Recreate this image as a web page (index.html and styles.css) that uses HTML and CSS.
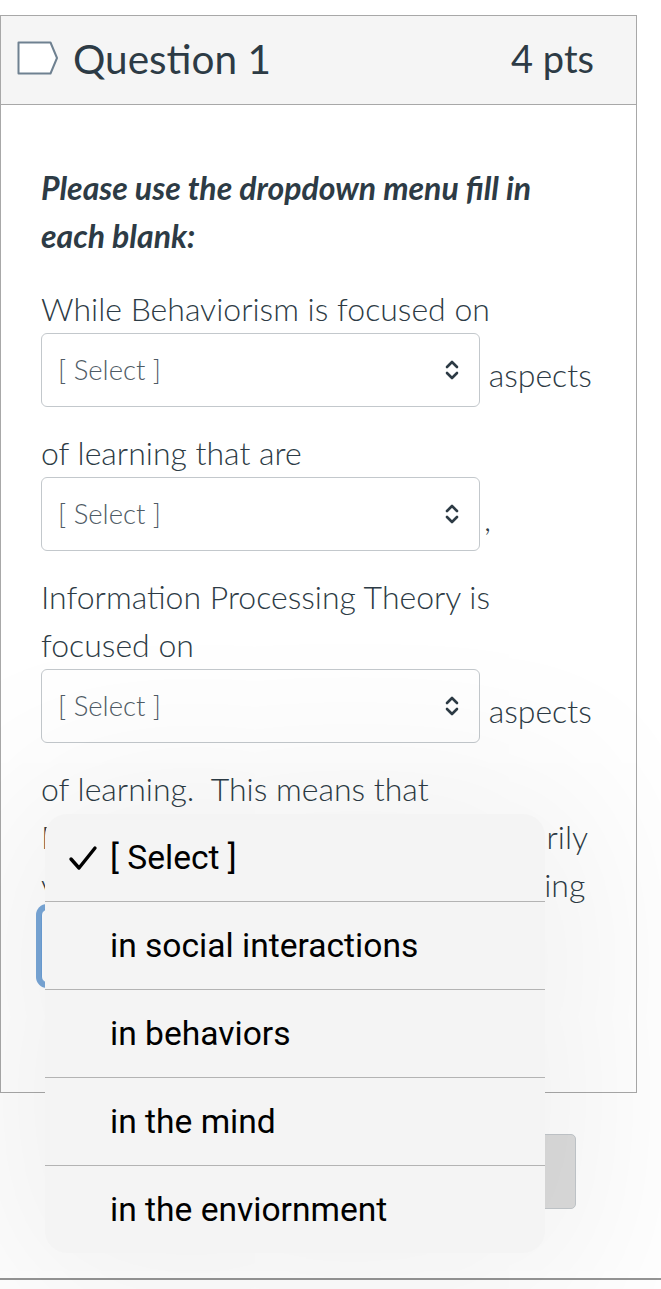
FILE: index.html
```html
<!DOCTYPE html>
<html lang="en">
<head>
<meta charset="utf-8">
<title>Question 1</title>
<link rel="stylesheet" href="styles.css">
</head>
<body>
<div class="page">
  <div class="card">
    <div class="card-head">
      <svg class="flag" width="42" height="34" viewBox="0 0 42 34" aria-hidden="true">
        <path d="M1.5 1.5 H33.5 L40 17 L33.5 32.5 H1.5 Z" fill="#fff" stroke="#6f8191" stroke-width="2" stroke-linejoin="round"/>
      </svg>
      <span class="q-title">Question 1</span>
      <span class="pts">4 pts</span>
    </div>
    <div class="card-body">
      <p class="instr">Please use the dropdown menu fill in each blank:</p>
      <p class="text">While Behaviorism is focused on <span class="sel"><span class="sel-label">[ Select ]</span><svg class="chev" width="14" height="24" viewBox="0 0 14 24" aria-hidden="true"><path d="M2 9 L7 4 L12 9 M2 15 L7 20 L12 15" fill="none" stroke="#2d3b45" stroke-width="2.6" stroke-linecap="round" stroke-linejoin="round"/></svg></span> aspects of learning that are <span class="sel"><span class="sel-label">[ Select ]</span><svg class="chev" width="14" height="24" viewBox="0 0 14 24" aria-hidden="true"><path d="M2 9 L7 4 L12 9 M2 15 L7 20 L12 15" fill="none" stroke="#2d3b45" stroke-width="2.6" stroke-linecap="round" stroke-linejoin="round"/></svg></span><span class="comma">,</span> Information Processing Theory is focused on <span class="sel"><span class="sel-label">[ Select ]</span><svg class="chev" width="14" height="24" viewBox="0 0 14 24" aria-hidden="true"><path d="M2 9 L7 4 L12 9 M2 15 L7 20 L12 15" fill="none" stroke="#2d3b45" stroke-width="2.6" stroke-linecap="round" stroke-linejoin="round"/></svg></span> aspects of learning.&nbsp; This means that Behaviorism shows learning as primarily visible, with most of learning happening <span class="sel focus"><span class="sel-label">[ Select ]</span><svg class="chev" width="14" height="24" viewBox="0 0 14 24" aria-hidden="true"><path d="M2 9 L7 4 L12 9 M2 15 L7 20 L12 15" fill="none" stroke="#2d3b45" stroke-width="2.6" stroke-linecap="round" stroke-linejoin="round"/></svg></span></p>
    </div>
  </div>
  <div class="actions">
    <button class="next" type="button">Next</button>
  </div>
  <div class="footer-line"></div>

  <div class="picker" role="listbox">
    <div class="opt first" role="option" aria-selected="true">
      <span class="check"><svg width="30" height="26" viewBox="0 0 30 26" aria-hidden="true"><path d="M3 14 L11 23 L27 3" fill="none" stroke="#000" stroke-width="3.4" stroke-linecap="round" stroke-linejoin="round"/></svg></span>
      <span>[ Select ]</span>
    </div>
    <div class="opt" role="option"><span class="check"></span><span>in social interactions</span></div>
    <div class="opt" role="option"><span class="check"></span><span>in behaviors</span></div>
    <div class="opt" role="option"><span class="check"></span><span>in the mind</span></div>
    <div class="opt" role="option"><span class="check"></span><span>in the enviornment</span></div>
  </div>
</div>
</body>
</html>
```

FILE: styles.css
```css
html, body {
  margin: 0;
  padding: 0;
  background: #ffffff;
}

body {
  font-family: Lato, "Noto Sans", sans-serif;
  color: #2d3b45;
}

.page {
  position: relative;
  width: 661px;
  height: 1289px;
  overflow: hidden;
}

.card {
  margin-top: 15px;
  width: 637px;
  box-sizing: border-box;
  border: 1px solid #a8a8a8;
  background: #fff;
}

.card-head {
  height: 89px;
  box-sizing: border-box;
  background: #f5f5f5;
  border-bottom: 1px solid #a8a8a8;
  display: flex;
  align-items: center;
  padding: 0 42px 0 16px;
}

.flag {
  flex: none;
  margin-right: 14px;
  margin-top: -4px;
}

.q-title {
  font-size: 40.5px;
  flex: 1;
  margin-top: -4px;
}

.pts {
  font-size: 38px;
  margin-top: -4px;
}

.card-body {
  padding: 59px 40px 87px 40px;
}

.instr {
  margin: 0 0 25px;
  font-size: 32px;
  line-height: 48px;
  font-weight: 700;
  font-style: italic;
}

.text {
  margin: 0;
  font-size: 32px;
  line-height: 48px;
  font-weight: 300;
  color: #2d3b45;
}

.sel {
  display: inline-flex;
  align-items: center;
  justify-content: space-between;
  box-sizing: border-box;
  width: 439px;
  height: 74px;
  margin-bottom: 22px;
  padding: 0 20px 0 16px;
  border: 1px solid #c3c8cc;
  border-radius: 6px;
  background: #fff;
  vertical-align: 7px;
  font-size: 27.5px;
  font-weight: 300;
  line-height: 1;
  color: #4f5b65;
}

.sel.focus {
  border-color: #6b9fd6;
  box-shadow: 0 0 0 5px #79a7d8;
}

.chev {
  flex: none;
}

.comma {
  margin-left: 4px;
}

.actions {
  margin-top: 41px;
  display: flex;
  justify-content: flex-end;
  padding-right: 85px;
}

.next {
  width: 146px;
  height: 75px;
  box-sizing: border-box;
  border: 1px solid #c3c8cc;
  border-radius: 5px;
  background: #dcdcdc;
  color: #2d3b45;
  font-family: Lato, sans-serif;
  font-size: 26px;
}

.footer-line {
  margin-top: 69px;
  border-top: 2px solid #959595;
}

.picker {
  position: absolute;
  left: 45px;
  top: 814px;
  width: 500px;
  border-radius: 22px;
  background: #f4f4f4;
  overflow: hidden;
  box-shadow: 0 10px 180px 50px rgba(0, 0, 0, 0.06);
  font-family: Roboto, "Liberation Sans", sans-serif;
  color: #000;
}

.opt {
  height: 88px;
  box-sizing: border-box;
  border-top: 1px solid #b3b3b3;
  display: flex;
  align-items: center;
  padding-left: 23px;
  font-size: 33.6px;
}

.opt.first {
  height: 87px;
  border-top: none;
}

.check {
  width: 42px;
  flex: none;
  display: flex;
  align-items: center;
}
```
